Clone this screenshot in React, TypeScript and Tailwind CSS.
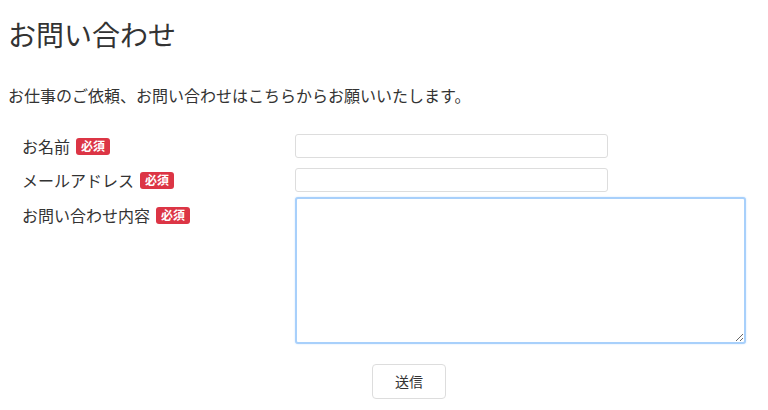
export default function App() {
  const font = { fontFamily: '"Noto Sans CJK JP", "Noto Sans", sans-serif' };

  const Badge = () => (
    <span className="ml-[6px] inline-flex h-[17px] items-center rounded-[3px] bg-[#dc3545] px-[5px] text-[12px] font-bold leading-none text-white">
      必須
    </span>
  );

  return (
    <div className="h-[410px] w-[768px] bg-white text-[#333]" style={font}>
      <h1 className="pl-[8px] pt-[14px] text-[28px] leading-[40px] font-normal">お問い合わせ</h1>
      <p className="mt-[30px] pl-[8px] text-[16px] leading-[22px]">
        お仕事のご依頼、お問い合わせはこちらからお願いいたします。
      </p>

      <div className="mt-[28px] grid grid-cols-[295px_1fr] gap-y-[10px]">
        <div className="flex h-[24px] items-center pl-[22px] text-[16px]">
          お名前
          <Badge />
        </div>
        <div>
          <input className="block h-[24px] w-[313px] rounded-[3px] border border-[#ddd] bg-white outline-none" />
        </div>

        <div className="flex h-[24px] items-center pl-[22px] text-[16px]">
          メールアドレス
          <Badge />
        </div>
        <div>
          <input className="block h-[24px] w-[313px] rounded-[3px] border border-[#ddd] bg-white outline-none" />
        </div>

        <div className="-mt-[5px] flex h-[24px] items-center self-start pl-[22px] pt-[12px] text-[16px]">
          お問い合わせ内容
          <Badge />
        </div>
        <div className="-mt-[5px]">
          <textarea className="block h-[147px] w-[451px] rounded-[3px] border-2 border-[#a8d0fb] bg-white shadow-[0_0_2px_#cde4fd] outline-none" />
        </div>
      </div>

      <div className="mt-[20px] flex justify-center pl-[50px]">
        <button className="h-[35px] w-[74px] rounded-[4px] border border-[#ddd] bg-white text-[14px] text-[#333]">
          送信
        </button>
      </div>
    </div>
  );
}
